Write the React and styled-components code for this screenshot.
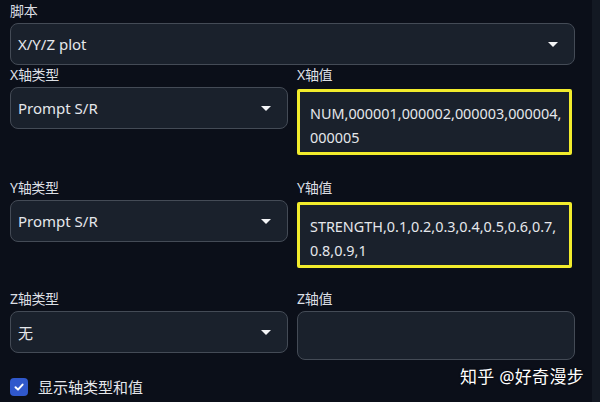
import React from 'react';
import styled, { createGlobalStyle } from 'styled-components';

const GlobalStyle = createGlobalStyle`
  html, body {
    margin: 0;
    padding: 0;
    background: #0b0f19;
  }
  body {
    font-family: "Noto Sans", "Noto Sans CJK SC", sans-serif;
    color: #e5e7eb;
  }
`;

const Page = styled.div`
  position: relative;
  display: flex;
  width: 600px;
  height: 402px;
  overflow: hidden;
  background: #0b0f19;
`;

const Panel = styled.div`
  flex: 1;
  display: flex;
  flex-direction: column;
  padding: 0 17px 0 10px;
  & > * {
    flex-shrink: 0;
  }
`;

const EdgeStrip = styled.div`
  width: 8px;
  background: #131923;
`;

const Field = styled.div`
  display: flex;
  flex-direction: column;
  min-width: 0;
`;

const Label = styled.span`
  font-size: 14px;
  line-height: 20px;
  height: 20px;
  margin-top: ${(p) => p.$top || 0}px;
  margin-bottom: 2px;
  color: #dcdfe4;
  letter-spacing: -0.3px;
`;

const Row = styled.div`
  display: grid;
  grid-template-columns: 1fr 1fr;
  column-gap: 9px;
  align-items: start;
  margin-top: ${(p) => p.$top || 0}px;
`;

const Select = styled.div`
  display: flex;
  align-items: center;
  justify-content: space-between;
  height: 42px;
  flex-shrink: 0;
  box-sizing: border-box;
  padding: 0 16px 0 7px;
  background: #1a212c;
  border: 1px solid #444b56;
  border-radius: 8px;
  font-size: 15px;
  color: #e5e7eb;
`;

const Caret = styled.span`
  width: 0;
  height: 0;
  border-left: 5px solid transparent;
  border-right: 5px solid transparent;
  border-top: 5px solid #f3f4f6;
`;

const TextBox = styled.div`
  box-sizing: border-box;
  height: ${(p) => p.$height}px;
  padding: ${(p) => (p.$highlight ? '10px 4px 6px 10px' : '10px 12px')};
  background: #1a212c;
  border: ${(p) => (p.$highlight ? '3px solid #f2ec2c' : '1px solid #444b56')};
  border-radius: ${(p) => (p.$highlight ? '2px' : '8px')};
  margin-top: ${(p) => (p.$highlight ? 2 : 0)}px;
  margin-right: ${(p) => (p.$highlight ? 3 : 0)}px;
  font-size: 14.4px;
  line-height: 24px;
  color: #e5e7eb;
  overflow: hidden;
`;

const CheckRow = styled.label`
  display: flex;
  align-items: center;
  gap: 10px;
  margin-top: 16px;
  font-size: 15px;
  color: #e5e7eb;
`;

const CheckBox = styled.span`
  display: flex;
  align-items: center;
  justify-content: center;
  width: 18px;
  height: 18px;
  border-radius: 4px;
  background: #3058cc;
`;

const Watermark = styled.div`
  position: absolute;
  right: 16px;
  bottom: 14px;
  font-size: 17px;
  color: #ffffff;
  text-shadow: 0 0 2px rgba(0, 0, 0, 0.8);
  letter-spacing: 0.3px;
`;

const Dropdown = ({ value }) => (
  <Select>
    <span>{value}</span>
    <Caret />
  </Select>
);

const Values = ({ text }) =>
  text.split(',').map((part, i, all) => (
    <React.Fragment key={i}>
      {part}
      {i < all.length - 1 && ','}
      {i < all.length - 1 && <wbr />}
    </React.Fragment>
  ));

const axes = [
  { axis: 'X', type: 'Prompt S/R', values: 'NUM,000001,000002,000003,000004,000005', height: 66, top: 0 },
  { axis: 'Y', type: 'Prompt S/R', values: 'STRENGTH,0.1,0.2,0.3,0.4,0.5,0.6,0.7,0.8,0.9,1', height: 66, top: 23 },
  { axis: 'Z', type: '无', values: '', height: 49, top: 21 },
];

export default function App() {
  return (
    <Page>
      <GlobalStyle />
      <Panel>
        <Label $top={1}>脚本</Label>
        <Dropdown value="X/Y/Z plot" />
        {axes.map((a) => (
          <Row key={a.axis} $top={a.top}>
            <Field>
              <Label>{a.axis}轴类型</Label>
              <Dropdown value={a.type} />
            </Field>
            <Field>
              <Label>{a.axis}轴值</Label>
              <TextBox $height={a.height} $highlight={!!a.values}>
                <Values text={a.values} />
              </TextBox>
            </Field>
          </Row>
        ))}
        <CheckRow>
          <CheckBox>
            <svg width="12" height="12" viewBox="0 0 12 12">
              <path d="M2.5 6.2 L5 8.6 L9.6 3.6" fill="none" stroke="#fff" strokeWidth="2" strokeLinecap="round" strokeLinejoin="round" />
            </svg>
          </CheckBox>
          显示轴类型和值
        </CheckRow>
      </Panel>
      <EdgeStrip />
      <Watermark>知乎 @好奇漫步</Watermark>
    </Page>
  );
}
